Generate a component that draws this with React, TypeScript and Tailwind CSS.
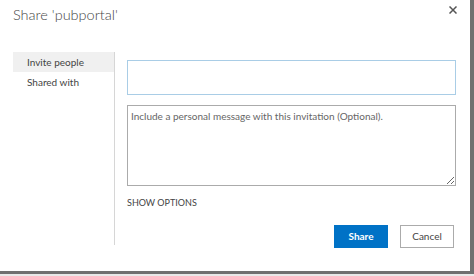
import React from 'react';

const font = { fontFamily: 'Lato, "Open Sans", sans-serif' };

export default function App() {
  return (
    <div className="w-[474px] h-[276px] bg-[#e9e9e9] overflow-hidden" style={font}>
      <div className="w-[474px] h-[274px] border-r-[4px] border-b-[3px] border-[#707070] bg-white">
        <div className="flex justify-between h-[52px] pl-[13px] pr-[12px]">
          <h1 className="mt-[4px] text-[14.5px] leading-[22px] font-light text-[#444444]">Share 'pubportal'</h1>
          <button className="mt-[5px] w-[10px] h-[10px] flex items-center justify-center text-[#555555]">
            <svg width="8" height="8" viewBox="0 0 8 8">
              <path d="M0.5 0.5 L7.5 7.5 M7.5 0.5 L0.5 7.5" stroke="currentColor" strokeWidth="1.5" />
            </svg>
          </button>
        </div>

        <div className="flex pl-[13px]">
          <nav className="w-[102px] h-[193px] border-r border-[#d6d6d6] text-[10px] text-[#444444]">
            <div className="h-[20px] bg-[#f0f0f0] pl-[14px] leading-[20px]">Invite people</div>
            <div className="h-[20px] pl-[14px] leading-[20px]">Shared with</div>
          </nav>

          <div className="pl-[12px] pt-[8px] w-[341px]">
            <input className="block w-[329px] h-[35px] border border-[#a9cde6] outline-none" />
            <textarea
              className="block mt-[10px] w-[329px] h-[81px] border border-[#ababab] px-[3px] py-[3px] text-[10px] leading-[14px] text-[#444444] placeholder:text-[#666666] outline-none"
              placeholder="Include a personal message with this invitation (Optional)."
            />
            <div className="mt-[11px] text-[9px] leading-[12px] text-[#444444]">SHOW OPTIONS</div>
            <div className="flex justify-end gap-[12px] mt-[16px] w-[327px]">
              <button className="w-[54px] h-[23px] bg-[#0072c6] text-white text-[10px] font-bold">Share</button>
              <button className="w-[54px] h-[23px] bg-white border border-[#ababab] text-[#444444] text-[10px]">Cancel</button>
            </div>
          </div>
        </div>
      </div>
    </div>
  );
}
